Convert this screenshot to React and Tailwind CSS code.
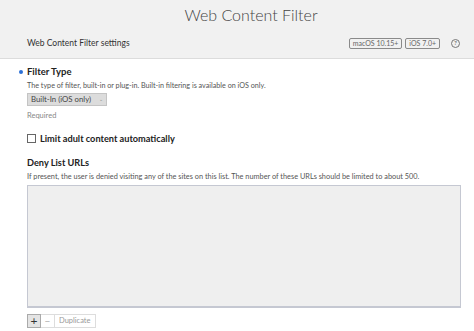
import React from "react";

export default function App() {
  return (
    <div className="w-[474px] h-[331px] bg-white overflow-hidden relative" style={{ fontFamily: "Lato, 'Noto Sans', sans-serif" }}>
      <div className="bg-[#f1f1f1] border-b border-[#dcdcdc] h-[59px] flex flex-col">
        <div className="h-[30px] flex items-center justify-center pl-[28px]">
          <span className="text-[16px] font-light text-[#444] leading-none">Web Content Filter</span>
        </div>
        <div className="flex items-center pl-[27px] pr-[14px] mt-[8px]">
          <span className="text-[8.5px] text-[#333] leading-none">Web Content Filter settings</span>
          <div className="ml-auto flex items-center gap-[3px]">
            <span className="border border-[#8a8a8a] rounded-[2px] text-[7px] text-[#666] leading-none px-[3px] h-[11px] flex items-center">macOS 10.15+</span>
            <span className="border border-[#8a8a8a] rounded-[2px] text-[7px] text-[#666] leading-none px-[3px] h-[11px] flex items-center">iOS 7.0+</span>
            <span className="ml-[8px] w-[9px] h-[9px] rounded-full border border-[#777] text-[6.5px] text-[#555] flex items-center justify-center leading-none">?</span>
          </div>
        </div>
      </div>

      <div className="pl-[27px] pr-[13px]">
        <div className="relative mt-[7px] flex items-center h-[12px]">
          <span className="absolute left-[-8px] top-[4px] w-[4px] h-[4px] rounded-full bg-[#2b6fd6]" />
          <span className="text-[9.5px] font-bold text-[#222] leading-none">Filter Type</span>
        </div>
        <div className="mt-[3px] text-[7.2px] text-[#555] leading-[10px]">The type of filter, built-in or plug-in. Built-in filtering is available on iOS only.</div>
        <div className="mt-[2px] w-[80px] h-[13px] bg-[#dcdcdc] border border-[#c4c4c4] flex items-center px-[3px]">
          <span className="text-[7.8px] text-[#444] leading-none">Built-In (iOS only)</span>
          <span className="ml-auto text-[5px] text-[#888] leading-none">⌄</span>
        </div>
        <div className="mt-[6px] text-[7.5px] text-[#888] leading-none">Required</div>
        <div className="mt-[14px] flex items-center gap-[4px]">
          <span className="w-[9px] h-[9px] border border-[#666] bg-white" />
          <span className="text-[9.2px] font-bold text-[#222] leading-none">Limit adult content automatically</span>
        </div>
        <div className="mt-[15px] text-[9.2px] font-bold text-[#222] leading-none">Deny List URLs</div>
        <div className="mt-[5px] text-[7.35px] text-[#555] leading-[10px]">If present, the user is denied visiting any of the sites on this list. The number of these URLs should be limited to about 500.</div>
        <div className="mt-[3px] h-[123px] bg-[#efefef] border border-[#c5c8d2] border-b-2" />
        <div className="mt-[6px] flex items-stretch h-[14px]">
          <span className="w-[14px] border border-[#aaa] bg-[#e4e4e4] flex items-center justify-center text-[12px] text-[#333] leading-none">+</span>
          <span className="w-[14px] border-y border-r border-[#ddd] flex items-center justify-center text-[10px] text-[#aaa] leading-none">−</span>
          <span className="px-[4px] border-y border-r border-[#ddd] flex items-center text-[7.5px] text-[#999] leading-none">Duplicate</span>
        </div>
      </div>
    </div>
  );
}
